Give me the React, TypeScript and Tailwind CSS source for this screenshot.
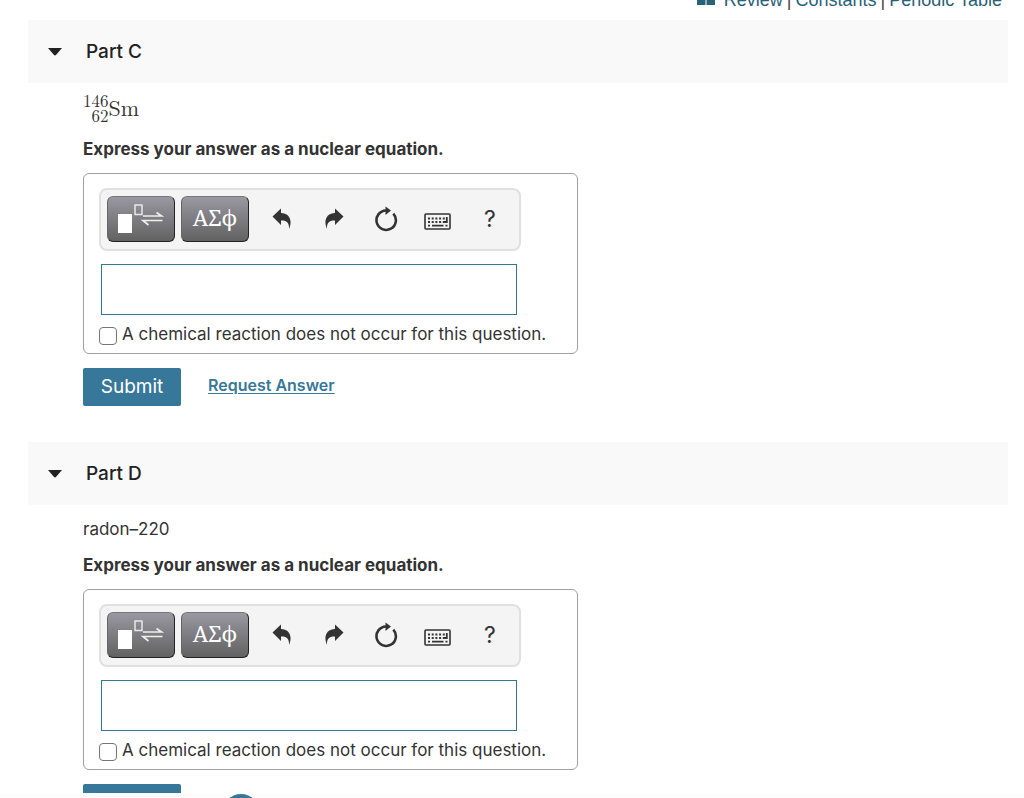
import type { ReactNode } from "react";

function ToolButton({ label, children }: { label: string; children: ReactNode }) {
  return (
    <button
      type="button"
      aria-label={label}
      className="flex h-[46px] w-13 items-center justify-center text-[#333]"
    >
      {children}
    </button>
  );
}

function DarkButton({ label, children }: { label: string; children: ReactNode }) {
  return (
    <button
      type="button"
      aria-label={label}
      className="flex h-[46px] w-[68px] items-center justify-center rounded-md border border-t-[#777] border-r-[#222] border-b-[#222] border-l-[#666] bg-linear-to-b from-[#9a98a2] to-[#626262] text-white"
    >
      {children}
    </button>
  );
}

function TemplateIcon() {
  return (
    <svg width="48" height="32" viewBox="0 0 48 32" fill="none">
      <rect x="1" y="11" width="14" height="19" fill="#fff" />
      <rect x="18" y="2" width="7" height="9.5" stroke="#e8e8e8" strokeWidth="1.5" />
      <path d="M26 13H44.5L39.5 9.5M45.5 17.5H26L31.5 22" stroke="#eee" strokeWidth="1.7" />
    </svg>
  );
}

function UndoIcon() {
  return (
    <svg width="20" height="22" viewBox="0 0 20 22" fill="currentColor">
      <path d="M0.5 8.5L9 0.5V5C17 5 21 12 17 21C17.5 14 14 12 9 12.5V17Z" />
    </svg>
  );
}

function RedoIcon() {
  return (
    <svg width="20" height="22" viewBox="0 0 20 22" fill="currentColor">
      <path d="M19.5 8.5L11 0.5V5C3 5 -1 12 3 21C2.5 14 6 12 11 12.5V17Z" />
    </svg>
  );
}

function ResetIcon() {
  return (
    <svg width="24" height="26" viewBox="0 0 24 26" fill="none">
      <path d="M19.3 7.6A9.7 9.7 0 1 1 12 4.5" stroke="currentColor" strokeWidth="2.6" />
      <path d="M11.5 0.5L17 4.5L11.5 9Z" fill="currentColor" />
    </svg>
  );
}

function KeyboardIcon() {
  return (
    <svg width="28" height="18" viewBox="0 0 28 18" fill="none" stroke="currentColor">
      <rect x="1" y="1" width="25" height="15" rx="1" strokeWidth="1.6" />
      <path d="M4 5.5H21M4 9H21" strokeWidth="2" strokeDasharray="2 1.7" />
      <path d="M22.8 4V10M20 9H23.5M4 12.7H6M8 12.7H19.5M21.5 12.7H23.5" strokeWidth="1.8" />
    </svg>
  );
}

function AnswerBox({ id }: { id: string }) {
  return (
    <div className="w-[495px] rounded-md border border-[#a0a0a0] px-[15px] pt-[14px] pb-2">
      <div className="flex h-[63px] w-[422px] items-start rounded-lg border-2 border-[#e0e0e0] bg-[#f4f4f4] px-1.5 pt-1.5">
        <div className="flex gap-1.5">
          <DarkButton label="Templates">
            <TemplateIcon />
          </DarkButton>
          <DarkButton label="Greek symbols">
            <span className="pb-1 font-['Noto_Serif','DejaVu_Serif',serif] text-[22px] leading-6">ΑΣϕ</span>
          </DarkButton>
        </div>
        <div className="ml-[7px] flex">
          <ToolButton label="Undo"><UndoIcon /></ToolButton>
          <ToolButton label="Redo"><RedoIcon /></ToolButton>
          <ToolButton label="Reset"><ResetIcon /></ToolButton>
          <ToolButton label="Keyboard shortcuts"><span className="pt-1.5"><KeyboardIcon /></span></ToolButton>
          <ToolButton label="Help"><span className="text-[23px]">?</span></ToolButton>
        </div>
      </div>
      <input
        type="text"
        aria-label={`Answer for ${id}`}
        className="mt-[13px] ml-0.5 block h-[51px] w-[416px] border border-[#2f7898] bg-white px-2 outline-none"
      />
      <label className="mt-2 flex h-[22px] items-start gap-[5px] whitespace-nowrap text-[17px] leading-[22px]">
        <input
          type="checkbox"
          className="mt-1 size-[18px] shrink-0 appearance-none rounded-[4px] border border-[#767676] bg-white checked:bg-[#37789a]"
        />
        A chemical reaction does not occur for this question.
      </label>
    </div>
  );
}

function Part({ title, children }: { title: string; children: ReactNode }) {
  return (
    <section className="pb-9">
      <h2 className="mr-4 ml-7 bg-[#f9f9f9] text-[19px] font-medium text-[#222]">
        <button type="button" className="flex h-[63px] w-full items-center gap-6 pl-5">
          <svg width="14" height="8" viewBox="0 0 14 8" fill="currentColor">
            <path d="M0 0H14L8.2 6.8Q7 8 5.8 6.8Z" />
          </svg>
          <span className="pt-0.5">{title}</span>
        </button>
      </h2>
      <div className="px-[83px]">
        {children}
        <p className="mb-3 text-[17px] leading-6 font-bold">Express your answer as a nuclear equation.</p>
        <AnswerBox id={title} />
        <div className="mt-[14px] flex items-center gap-[27px]">
          <button type="button" className="h-[38px] w-[98px] rounded-xs bg-[#37789a] text-[19px] text-white">
            Submit
          </button>
          <a href="#request" className="pb-1 text-base font-semibold text-[#37789a] underline underline-offset-2">
            Request Answer
          </a>
        </div>
      </div>
    </section>
  );
}

export default function App() {
  return (
    <div className="flex h-screen flex-col overflow-hidden bg-white font-['Inter','Liberation_Sans',sans-serif] text-[#333]">
      <main className="min-h-0 flex-1 overflow-hidden">
        <nav className="flex h-5 items-end justify-end gap-1 overflow-hidden pr-[22px] pb-[10px] font-['Liberation_Sans',sans-serif] text-lg leading-5 text-[#28627a]">
          <svg width="20" height="20" viewBox="0 0 20 20" className="mr-1" fill="currentColor">
            <path d="M1 1Q6 0 9.5 2V15H1ZM10.5 2Q14 0 19 1V15H10.5Z" />
          </svg>
          <a href="#review">Review</a>
          <span className="text-[#444]">|</span>
          <a href="#constants">Constants</a>
          <span className="text-[#444]">|</span>
          <a href="#periodic">Periodic Table</a>
        </nav>
        <Part title="Part C">
          <div className="flex h-[54px] items-center pb-1 font-['Latin_Modern_Roman','Liberation_Serif',serif] text-[22px]">
            <span className="flex flex-col items-end">
              <sup className="static text-[17px] leading-[15px]">146</sup>
              <sub className="static text-[17px] leading-[15px]">62</sub>
            </span>
            <span className="pb-1">Sm</span>
          </div>
        </Part>
        <Part title="Part D">
          <p className="pt-[13px] pb-3 text-[17px] leading-[23px]">radon–220</p>
        </Part>
      </main>
      <footer className="h-[5px] shrink-0 overflow-hidden bg-[#fdfdfd] pt-px pl-[222px]">
        <div className="size-[38px] rounded-full bg-[#37789a]" />
      </footer>
    </div>
  );
}
